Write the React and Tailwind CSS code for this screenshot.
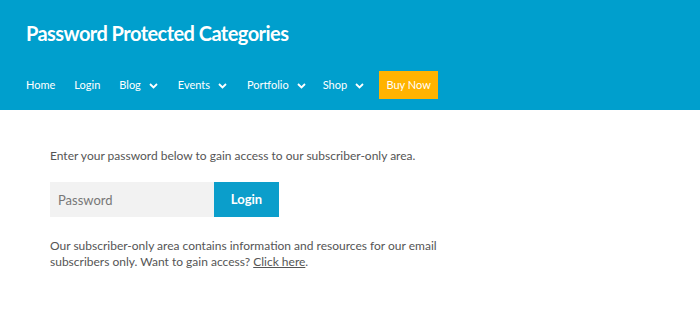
import React from "react";

function Chevron() {
  return (
    <svg width="9" height="6" viewBox="0 0 9 6" className="ml-[8px] mt-[1px]">
      <path d="M1 1l3.5 3.5L8 1" fill="none" stroke="white" strokeWidth="1.8" />
    </svg>
  );
}

const links = [
  { label: "Home", sub: false, mr: "mr-[19px]" },
  { label: "Login", sub: false, mr: "mr-[19px]" },
  { label: "Blog", sub: true, mr: "mr-[20px]" },
  { label: "Events", sub: true, mr: "mr-[20px]" },
  { label: "Portfolio", sub: true, mr: "mr-[17px]" },
  { label: "Shop", sub: true, mr: "mr-[15px]" },
];

export default function App() {
  return (
    <div className="w-[700px] h-[321px] bg-white font-['Lato',sans-serif]">
      <header className="bg-[#009fcd] h-[110px] pl-[26px] pt-[19px]">
        <h1 className="text-white font-bold text-[20px] leading-[28px] tracking-[-0.55px]">
          Password Protected Categories
        </h1>
        <nav className="flex items-center mt-[24px] text-white text-[11px]">
          {links.map((l) => (
            <a key={l.label} className={`flex items-center ${l.mr}`}>
              {l.label}
              {l.sub && <Chevron />}
            </a>
          ))}
          <a className="bg-[#ffb300] h-[28px] w-[59px] flex items-center justify-center">
            Buy Now
          </a>
        </nav>
      </header>
      <main className="pl-[50px] pt-[38px] text-[#555] text-[12px]">
        <p className="leading-[16px]">
          Enter your password below to gain access to our subscriber-only area.
        </p>
        <form className="flex mt-[18px]">
          <input
            placeholder="Password"
            className="w-[164px] h-[35px] bg-[#f2f2f2] px-[8px] text-[13px] placeholder:text-[#777] outline-none"
          />
          <button
            type="button"
            className="w-[65px] h-[35px] bg-[#0b9ecb] text-white font-bold text-[13px]"
          >
            Login
          </button>
        </form>
        <p className="leading-[16px] mt-[21px] w-[400px]">
          Our subscriber-only area contains information and resources for our email subscribers only. Want to gain access? <a className="underline">Click here</a>.
        </p>
      </main>
    </div>
  );
}
